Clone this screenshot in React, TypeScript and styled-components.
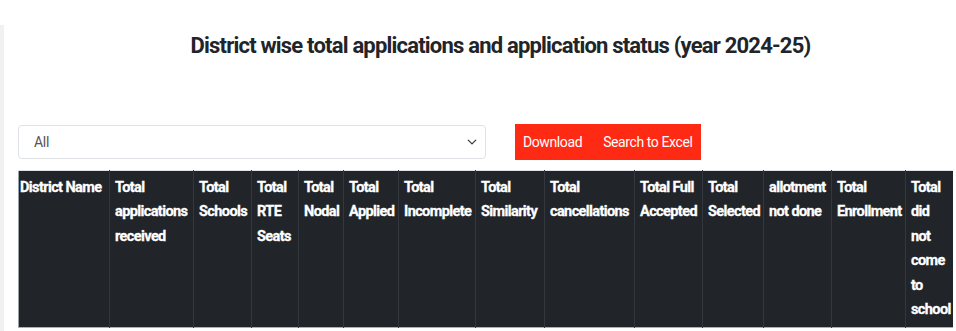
import styled, { createGlobalStyle } from "styled-components";

const GlobalStyle = createGlobalStyle`
  body {
    margin: 0;
    background: #ffffff;
    font-family: Roboto, "Liberation Sans", sans-serif;
  }
`;

const columns: { label: string; width: number }[] = [
  { label: "District Name", width: 91 },
  { label: "Total applications received", width: 84 },
  { label: "Total Schools", width: 58 },
  { label: "Total RTE Seats", width: 47 },
  { label: "Total Nodal", width: 45 },
  { label: "Total Applied", width: 55 },
  { label: "Total Incomplete", width: 77 },
  { label: "Total Similarity", width: 69 },
  { label: "Total cancellations", width: 90 },
  { label: "Total Full Accepted", width: 68 },
  { label: "Total Selected", width: 61 },
  { label: "allotment not done", width: 68 },
  { label: "Total Enrollment", width: 74 },
  { label: "Total did not come to school", width: 47 },
];

const App = (): JSX.Element => {
  return (
    <>
      <GlobalStyle />
      <Page>
        <Title>District wise total applications and application status (year 2024-25)</Title>
        <Toolbar>
          <SelectBox>
            <span>All</span>
            <svg width="10" height="10" viewBox="0 0 16 16">
              <path d="M2 5l6 6 6-6" fill="none" stroke="#343a40" strokeWidth="2" strokeLinecap="round" strokeLinejoin="round" />
            </svg>
          </SelectBox>
          <RedButton>
            <span>Download</span>
            <span>Search to Excel</span>
          </RedButton>
        </Toolbar>
        <Table>
          <thead>
            <tr>
              {columns.map((c, i) => (
                <Th key={c.label} $w={c.width} $first={i === 0}>
                  {c.label}
                </Th>
              ))}
            </tr>
          </thead>
        </Table>
      </Page>
    </>
  );
};

const Page = styled.div`
  margin-top: 25px;
  border-left: 4px solid #f1f1f1;
  padding: 8px 4px 0 14px;
  min-height: 306px;
  box-sizing: border-box;
`;

const Title = styled.h2`
  margin: 0;
  padding-left: 31px;
  text-align: center;
  font-size: 22px;
  line-height: 26px;
  font-weight: 700;
  letter-spacing: -0.8px;
  color: #212529;
`;

const Toolbar = styled.div`
  display: flex;
  align-items: center;
  gap: 29px;
  margin-top: 65px;
`;

const SelectBox = styled.div`
  width: 468px;
  height: 34px;
  box-sizing: border-box;
  border: 1px solid #dee2e6;
  border-radius: 4px;
  display: flex;
  align-items: center;
  justify-content: space-between;
  padding: 0 8px 0 15px;
  font-size: 14px;
  color: #555;
  letter-spacing: -0.3px;
`;

const RedButton = styled.div`
  height: 36px;
  padding: 0 9px 0 8px;
  background: #ff2a14;
  display: flex;
  align-items: center;
  gap: 21px;
  color: #ffffff;
  font-size: 14px;
  letter-spacing: -0.4px;
`;

const Table = styled.table`
  margin-top: 10px;
  border-collapse: collapse;
  table-layout: fixed;
  width: 934px;
  background: #212529;
  border-top: 1px solid #dee2e6;
  border-bottom: 1px solid #aab0b5;
  border-left: 1px solid #9aa0a6;
`;

const Th = styled.th<{ $w: number; $first: boolean }>`
  width: ${(p) => p.$w}px;
  height: 155px;
  box-sizing: border-box;
  vertical-align: top;
  text-align: left;
  padding: 5px 1px 5px ${(p) => (p.$first ? 1 : 5)}px;
  border-left: ${(p) => (p.$first ? "none" : "1px solid #32383e")};
  color: #ffffff;
  font-size: 14.5px;
  line-height: 24.4px;
  font-weight: 700;
  letter-spacing: -0.6px;
  -webkit-text-stroke: 0.3px #ffffff;
  overflow: hidden;
`;

export default App;
